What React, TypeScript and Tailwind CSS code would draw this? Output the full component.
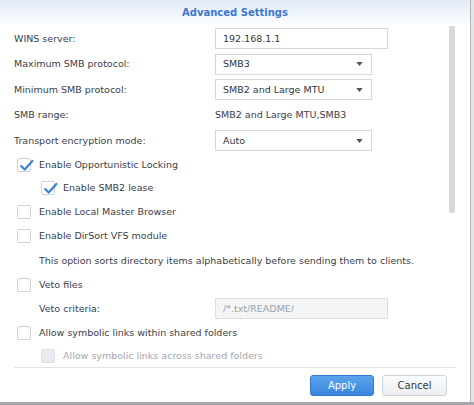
import { useState } from 'react'

const font = { fontFamily: '"DejaVu Sans", Verdana, sans-serif' }

const CheckMark = () => (
  <svg viewBox="0 0 14 14" className="absolute left-[1px] top-[-1px] h-[15px] w-[15px]">
    <path d="M2 7.5 L5.3 10.8 L12.5 2.8" fill="none" stroke="#3a7fd8" strokeWidth="2" strokeLinecap="round" strokeLinejoin="round" />
  </svg>
)

type CheckProps = {
  label: string
  checked?: boolean
  disabled?: boolean
  indent?: boolean
  h: string
}

const CheckRow = ({ label, checked, disabled, indent, h }: CheckProps) => (
  <div className={`flex items-center ${h} ${indent ? 'pl-[27px]' : 'pl-[3px]'}`}>
    <span
      className={`relative h-[14px] w-[14px] shrink-0 rounded-[2px] border ${
        disabled ? 'border-[#dde1e6] bg-[#e8ebef]' : 'border-[#cdd2d8] bg-white'
      }`}
    >
      {checked && <CheckMark />}
    </span>
    <span className={`ml-[8px] ${disabled ? 'text-[#a3a8ad]' : 'text-[#3b4148]'}`}>{label}</span>
  </div>
)

const Caret = () => (
  <svg viewBox="0 0 8 5" className="h-[4px] w-[7px]">
    <path d="M0 0 L8 0 L4 5 Z" fill="#4f555b" />
  </svg>
)

const Select = ({ value, w }: { value: string; w: string }) => (
  <div className={`flex h-[21px] ${w} items-center justify-between border border-[#d3d8dd] bg-white pl-[7px] pr-[8px] text-[#33383d]`}>
    <span>{value}</span>
    <Caret />
  </div>
)

const FormRow = ({ label, h, children }: { label: string; h: string; children: React.ReactNode }) => (
  <div className={`flex items-center ${h}`}>
    <div className="w-[201px] shrink-0 text-[#3b4148]">{label}</div>
    {children}
  </div>
)

export default function App() {
  const [wins] = useState('192.168.1.1')

  return (
    <div className="flex h-[405px] w-[474px] flex-col overflow-hidden" style={font}>
      <div className="flex h-[402px] bg-[#e4e5e7]">
        <div className="flex h-[402px] w-[471px] flex-col border-r border-[#b4b7ba] bg-white text-[9.5px] leading-none">
          {/* header */}
          <div className="flex h-[26px] shrink-0 items-center justify-center bg-gradient-to-b from-[#e1eaf5] to-white">
            <span className="text-[10px] font-bold text-[#3b78cf]">Advanced Settings</span>
          </div>

          <div className="relative flex-1">
            <div className="absolute left-[449px] top-0 h-[187px] w-[6px] rounded-b-[2px] bg-[#d7d8da]" />

            <div className="pl-[14px]">
              <FormRow label="WINS server:" h="h-[25px]">
                <div className="flex h-[21px] w-[173px] items-center border border-[#d3d8dd] bg-white pl-[7px] text-[#33383d]">
                  {wins}
                </div>
              </FormRow>
              <FormRow label="Maximum SMB protocol:" h="h-[26px]">
                <Select value="SMB3" w="w-[157px]" />
              </FormRow>
              <FormRow label="Minimum SMB protocol:" h="h-[25px]">
                <Select value="SMB2 and Large MTU" w="w-[157px]" />
              </FormRow>
              <FormRow label="SMB range:" h="h-[26px]">
                <span className="text-[#3b4148]">SMB2 and Large MTU,SMB3</span>
              </FormRow>
              <FormRow label="Transport encryption mode:" h="h-[25px]">
                <Select value="Auto" w="w-[157px]" />
              </FormRow>

              <CheckRow label="Enable Opportunistic Locking" checked h="h-[23px]" />
              <CheckRow label="Enable SMB2 lease" checked indent h="h-[24px]" />
              <CheckRow label="Enable Local Master Browser" h="h-[24px]" />
              <CheckRow label="Enable DirSort VFS module" h="h-[24px]" />
              <div className="flex h-[25px] items-center pl-[25px] text-[#3b4148]">
                This option sorts directory items alphabetically before sending them to clients.
              </div>
              <CheckRow label="Veto files" h="h-[23px]" />
              <div className="flex h-[25px] items-center">
                <div className="w-[201px] shrink-0 pl-[25px] text-[#3b4148]">Veto criteria:</div>
                <div className="flex h-[21px] w-[173px] items-center border border-[#dcdfe3] bg-[#f4f5f7] pl-[7px] text-[#9ba1a7]">
                  /*.txt/README/
                </div>
              </div>
              <CheckRow label="Allow symbolic links within shared folders" h="h-[24px]" />
              <CheckRow label="Allow symbolic links across shared folders" disabled indent h="h-[22px]" />
            </div>

            <div className="ml-[14px] h-px w-[442px] bg-[#e1e4e7]" />

            <div className="flex justify-end gap-[8px] pr-[23px] pt-[7px]">
              <button className="h-[21px] w-[64px] rounded-[3px] border border-[#3079d0] bg-gradient-to-b from-[#5aa3ec] to-[#3a86de] text-[10px] text-white">
                Apply
              </button>
              <button className="h-[21px] w-[65px] rounded-[3px] border border-[#cfd3d8] bg-gradient-to-b from-[#fafbfc] to-[#eceef1] text-[10px] text-[#33383d]">
                Cancel
              </button>
            </div>
          </div>
        </div>
      </div>
      <div className="h-[3px] bg-[#a6a8ab]" />
    </div>
  )
}
